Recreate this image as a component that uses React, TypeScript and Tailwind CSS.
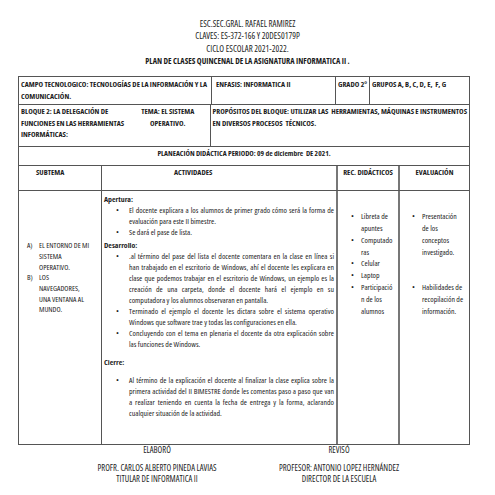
import React from 'react';

const justify = 'text-justify [text-align-last:justify]';

function Item({ lines }: { lines: string[] }) {
  return (
    <div className="flex pl-[12px]">
      <span className="w-[13px] shrink-0">•</span>
      <div className="w-[205px]">
        {lines.map((l, i) => (
          <div key={i} className={i < lines.length - 1 ? justify : 'whitespace-nowrap'}>
            {l}
          </div>
        ))}
      </div>
    </div>
  );
}

function SideItem({ lines, bx }: { lines: string[]; bx: string }) {
  return (
    <div className={`flex ${bx}`}>
      <span className="w-[10px] shrink-0">•</span>
      <div>
        {lines.map((l, i) => (
          <div key={i} className="whitespace-nowrap">{l}</div>
        ))}
      </div>
    </div>
  );
}

export default function App() {
  return (
    <div className="min-h-screen w-[495px] bg-white text-[#1c1c1c] font-['Open_Sans',sans-serif] [font-stretch:75%] text-[7.8px]">
      {/* Encabezado */}
      <div className="pt-[18px] text-center leading-[12.3px] text-[8.8px]">
        <div>ESC.SEC.GRAL. RAFAEL RAMIREZ</div>
        <div>CLAVES: ES-372-166 Y 20DES0179P</div>
        <div>CICLO ESCOLAR 2021-2022.</div>
        <div className="text-[8.2px] font-bold">PLAN DE CLASES QUINCENAL DE LA ASIGNATURA INFORMATICA II .</div>
      </div>

      {/* Tabla */}
      <div className="ml-[18px] mt-[9px] w-[452px] border border-[#555] leading-[11.5px]">
        <div className="flex text-[7.7px] font-bold leading-[12px]">
          <div className="w-[193px] whitespace-nowrap border-r border-[#555] px-[2px] pb-[2px] pt-[1px]">
            CAMPO TECNOLOGICO: TECNOLOGÍAS DE LA INFORMACIÓN Y LA
            <br />
            COMUNICACIÓN.
          </div>
          <div className="w-[124px] border-r border-[#555] px-[4px] pt-[1px]">ENFASIS: INFORMATICA II</div>
          <div className="w-[34px] whitespace-nowrap border-r border-[#555] px-[2px] pt-[1px]">GRADO 2°</div>
          <div className="flex-1 whitespace-nowrap px-[2px] pt-[1px]">GRUPOS A, B, C, D, E,&nbsp; F, G</div>
        </div>

        <div className="flex border-t border-[#555] text-[7.7px] font-bold leading-[11.5px]">
          <div className="w-[107px] whitespace-nowrap px-[2px] pb-[5.5px] pt-[1px]">
            BLOQUE 2: LA DELEGACIÓN DE
            <br />
            FUNCIONES EN LAS HERRAMIENTAS
            <br />
            INFORMÁTICAS:
          </div>
          <div className="w-[87px] border-r border-[#555] pt-[1px] text-center">
            TEMA: EL SISTEMA
            <br />
            OPERATIVO.
          </div>
          <div className="flex-1 whitespace-nowrap px-[2px] pt-[1px]">
            PROPÓSITOS DEL BLOQUE: UTILIZAR LAS&nbsp; HERRAMIENTAS, MÁQUINAS E INSTRUMENTOS
            <br />
            EN DIVERSOS PROCESOS&nbsp; TÉCNICOS.
          </div>
        </div>

        <div className="border-t border-[#555] pb-[5.5px] pt-[1px] text-center text-[7.5px] font-bold">
          PLANEACIÓN DIDÁCTICA PERIODO: 09 de diciembre&nbsp; DE 2021.
        </div>

        <div className="flex border-t border-[#555] text-[7.7px] font-bold">
          <div className="w-[83px] border-r border-[#555] pb-[11.5px] pl-[17px] pt-[1px]">SUBTEMA</div>
          <div className="w-[236px] border-r-2 border-[#777] pl-[72px] pt-[1px]">ACTIVIDADES</div>
          <div className="w-[62px] whitespace-nowrap border-r-2 border-[#777] pt-[1px] text-center">REC. DIDÁCTICOS</div>
          <div className="flex-1 pt-[1px] text-center">EVALUACIÓN</div>
        </div>

        <div className="flex border-t border-[#555]">
          {/* Subtema */}
          <div className="w-[83px] whitespace-nowrap border-r border-[#555] pl-[8px] pt-[49px] text-[7.6px] leading-[10.7px]">
            <div className="flex">
              <span className="w-[12px] shrink-0">A)</span>
              <div>
                EL ENTORNO DE MI
                <br />
                SISTEMA
                <br />
                OPERATIVO.
              </div>
            </div>
            <div className="flex">
              <span className="w-[12px] shrink-0">B)</span>
              <div>
                LOS
                <br />
                NAVEGADORES,
                <br />
                UNA VENTANA AL
                <br />
                MUNDO.
              </div>
            </div>
          </div>

          {/* Actividades */}
          <div className="w-[236px] border-r-2 border-[#777] pb-[25px] pl-[2px] pt-[3px] leading-[11px]">
            <div className="font-bold">Apertura:</div>
            <Item lines={['El docente explicara a los alumnos de primer grado cómo será la forma de', 'evaluación  para este II bimestre.']} />
            <Item lines={['Se dará el pase de lista.']} />
            <div className="mt-[2px] font-bold">Desarrollo:</div>
            <Item
              lines={[
                '.al término del pase del lista el docente comentara en la clase en línea si',
                'han trabajado en el escritorio de Windows, ahí el docente les explicara en',
                'clase que podemos trabajar en el escritorio de Windows, un ejemplo es la',
                'creación de una carpeta, donde el docente hará el ejemplo en su',
                'computadora y los alumnos observaran en pantalla.',
              ]}
            />
            <Item lines={['Terminado el ejemplo el docente les dictara sobre el sistema operativo', 'Windows que software trae y todas las configuraciones en ella.']} />
            <Item lines={['Concluyendo con el tema en plenaria el docente da otra explicación sobre', 'las funciones de Windows.']} />
            <div className="mt-[7px] font-bold">Cierre:</div>
            <div className="mt-[7px]">
              <Item
                lines={[
                  'Al término de la explicación el docente al finalizar la clase explica sobre la',
                  'primera actividad del II BIMESTRE donde les comentas paso a paso que van',
                  'a realizar teniendo en cuenta la fecha de entrega y la forma, aclarando',
                  'cualquier situación de la actividad.',
                ]}
              />
            </div>
          </div>

          {/* Recursos */}
          <div className="w-[62px] border-r-2 border-[#777] pt-[20px] leading-[11.8px]">
            <SideItem bx="pl-[13px]" lines={['Libreta de', 'apuntes']} />
            <SideItem bx="pl-[13px]" lines={['Computado', 'ras']} />
            <SideItem bx="pl-[13px]" lines={['Celular']} />
            <SideItem bx="pl-[13px]" lines={['Laptop']} />
            <SideItem bx="pl-[13px]" lines={['Participació', 'n de los', 'alumnos']} />
          </div>

          {/* Evaluación */}
          <div className="flex-1 pt-[20px] leading-[11.8px]">
            <SideItem bx="pl-[12px]" lines={['Presentación', 'de los', 'conceptos', 'investigado.']} />
            <div className="pt-[23.6px]" />
            <SideItem bx="pl-[12px]" lines={['Habilidades de', 'recopilación de', 'información.']} />
          </div>
        </div>
      </div>

      {/* Firmas */}
      <div className="flex text-center text-[8.6px] leading-[11px]">
        <div className="ml-[67px] w-[180px] whitespace-nowrap">
          <div>ELABORÓ</div>
          <div className="mt-[7px]">PROFR. CARLOS ALBERTO PINEDA LAVIAS</div>
          <div>TITULAR DE INFORMATICA II</div>
        </div>
        <div className="ml-[2px] w-[180px] whitespace-nowrap">
          <div>REVISÓ</div>
          <div className="mt-[7px]">PROFESOR: ANTONIO LOPEZ HERNÁNDEZ</div>
          <div>DIRECTOR DE LA ESCUELA</div>
        </div>
      </div>
    </div>
  );
}
